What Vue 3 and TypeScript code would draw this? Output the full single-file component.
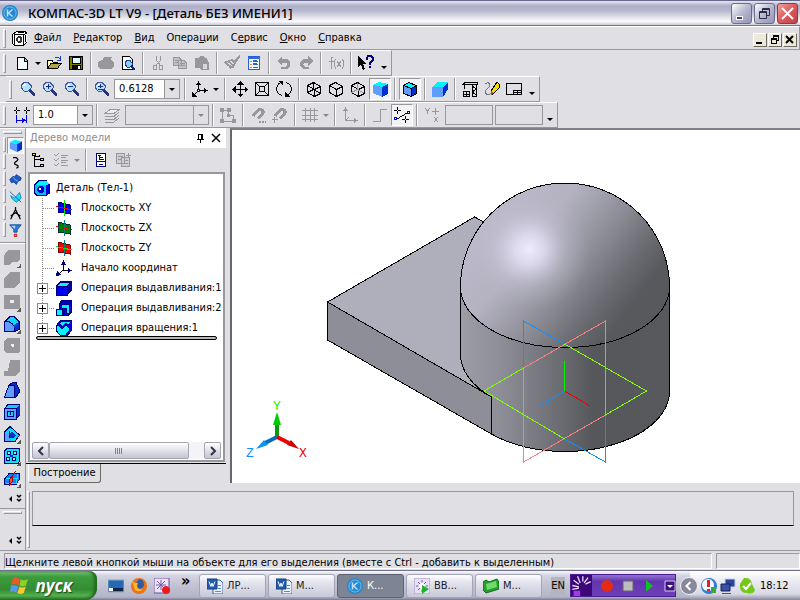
<script setup lang="ts">
import { h, ref } from 'vue'

type Shape = [d: string, fill?: string, stroke?: string, width?: number]

const G = '#98989c'
const K = '#000'
const N = '#00007b'
const lens: Shape[] = [
  ['M9 9 10 8 15 13V15H13L8 10Z', '#26347c'],
  ['M4 1.5H8L11 4.5V7L8 10H4L1.5 7V4Z', '#b4e2fb', '#3c56a4', 1],
  ['M4 3H6V4H5V5H3V4Z', '#fff'],
]
const wireCube: Shape[] = [
  ['M1.5 4.5 7.5 1.5 14.5 5.5V12.5L8.5 15.5 1.5 11.5Z', 'none', K],
  ['M1.5 4.5 8.5 8.5 14.5 5.5M8.5 8V15', 'none', K],
]
const magnet: Shape[] = [
  ['M3 9 8 3.5Q10.5 1.5 12.5 3.5 14 5.5 12 7.5L8 11.5', 'none', G, 3],
]

const icons: Record<string, Shape[]> = {
  part: [
    ['M2 4 7 1H14L16 4V12L12 16H4L1 13V5Z', '#fff', K],
    ['M3 4.5H12.5V15H3.5V5M13 5 15 3M14.5 5V12M7 2.5H13', 'none', K],
    ['M5 8 7 6H9L11 8V11L9 13H7L5 11Z', '#333'],
    ['M7 8H9V11H7Z', '#fff'],
  ],
  new: [['M3.5 2.5H10.5L13.5 5.5V14.5H3.5Z', '#f4fffd', K], ['M10 2.5V6H13.5', '#9cc', K]],
  open: [
    ['M1.5 5.5H6L7 7H11.5V13.5H1.5Z', '#ffffad', K],
    ['M1.5 13.5 5 8.5H15L11.5 13.5Z', '#b5a542', K],
    ['M8.5 3.5Q11 1 14 4M14.5 1V5H11', 'none', '#1b3cc8'],
  ],
  save: [
    ['M1.5 1.5H14.5V14.5H1.5Z', '#7b7b00', K],
    ['M4 2H12V8H4Z', '#dff', K],
    ['M4 10H13V14H4Z', K],
    ['M10 11H12V14H10Z', '#fff'],
  ],
  print: [['M1 6 5 5 6 2H14L13 5 16 7V12L13 14H3L0 12V8Z', G]],
  preview: [
    ['M2.5 1.5H9.5L12.5 4.5V14.5H2.5Z', '#fff', K],
    ['M7 5.5H10L12 8V10L10 12H7L5.5 10V7Z', '#84d2f8', '#1d3f98'],
    ['M11 11 15 15', 'none', '#16296f', 2],
  ],
  cut: [
    ['M6.5 1V5L8.5 8 10.5 5V1M8.5 7V8L5 11M8.5 8 11 11', 'none', G, 1],
    ['M3.5 10.5H6.5V14.5H3.5ZM9.5 10.5H12.5V14.5H9.5Z', 'none', G],
  ],
  copy: [
    ['M1.5 2.5H7L9.5 5V10.5H1.5ZM6.5 5.5H12L14.5 8V13.5H6.5Z', '#c3c3c6', G],
    ['M3 5.5H7M3 7.5H7M8 8.5H13M8 10.5H13', 'none', G],
  ],
  paste: [['M1 3H5L6 1H10L11 3H13L14 7H15V15H7L6 13H1Z', G], ['M8.5 8.5H12.5V13.5H8.5Z', '#d8d8dc']],
  brush: [
    ['M16 0 10 5 8 4 0 7 3 11 4 10 6 14 8 12 9 14 12 8 16 2Z', G],
    ['M3 7 8 11M6 6 10 9', 'none', '#ddd'],
  ],
  props: [
    ['M2.5 1.5H13.5V14.5H2.5Z', '#eef8ff', '#245edc'],
    ['M2 2H14V4H2Z', '#3068e0'],
    ['M4 6H6V7H4ZM4 9H6V10H4ZM4 12H6V13H4Z', '#e88020'],
    ['M7 6.5H12M7 9.5H12M7 12.5H12M7 5.5H11M7 8.5H11', 'none', '#2666d8'],
  ],
  undo: [['M1 6 6 1V4H11L14 7V11L11 14H5V12H9L11 10V9L10 8H6V11Z', G]],
  redo: [['M15 6 10 1V4H5L2 7V11L5 14H11V12H7L5 10V9L6 8H10V11Z', G]],
  fx: [
    ['M5 2.5H3.5V14M1 6.5H6M8 4 6.5 6V11L8 13.5M14 4 15.5 6V11L14 13.5', 'none', G],
    ['M9 6 13 12M13 6 9 12', 'none', G],
  ],
  help: [
    ['M0 1 8 9H5L7 14 5 15 3 10 0 12Z', K],
    ['M9 5V3L10 1H13L15 3V5L12 8V10', 'none', '#000080', 2],
    ['M11 11H13V13H11Z', '#000080'],
  ],
  zoom: lens,
  zoomIn: [...lens, ['M4 5.5H9M6.5 3V8', 'none', '#152a80']],
  zoomOut: [...lens, ['M4 5.5H9', 'none', '#152a80']],
  zoomFit: [...lens, ['M4 5.5H9M6.5 3V7M4 8.5H9', 'none', '#152a80']],
  axes: [
    ['M6.5 10V3M6.5 9.5H14M6 10 2 14', 'none', K],
    ['M6.5 0 9 4H4ZM16 9.5 12 7V12ZM0 16V11L5 16Z', K],
    ['M5.5 8.5H7.5V10.5H5.5Z', '#fff', '#00f'],
  ],
  move: [
    ['M8.5 2V14M2 8.5H14', 'none', K],
    ['M8.5 0 12 4H5ZM8.5 16 5 13H12ZM0 8.5 4 5V12ZM16 8.5 13 12V5Z', K],
  ],
  frame: [['M1.5 1.5H14.5V14.5H1.5ZM5.5 5.5H10.5V10.5H5.5ZM2 2 5 5M14 2 11 5M2 14 5 11M14 14 11 11', 'none', K]],
  rotate: [
    ['M6 14.5Q1 13 0.5 8 1 3 5 1.5M10 1.5Q15 3 15.5 8 15 13 11 14.5', 'none', K, 1],
    ['M2 0H7V5ZM9 11V16H14Z', K],
  ],
  wire: [...wireCube, ['M7.5 2V9M1.5 11.5 7.5 8.5 14.5 12.5', 'none', K]],
  hidden: wireCube,
  dashed: [...wireCube, ['M7.5 2V9M1.5 11.5 7.5 8.5 14.5 12.5', 'none', '#999']],
  solid: [
    ['M1 4 7 1 16 3 10 6Z', '#00f3ff'],
    ['M1 4 10 6V16L1 12Z', '#619cff'],
    ['M10 6 16 3V13L10 16Z', '#0030ce'],
  ],
  solidEdge: [
    ['M1.5 4.5 6.5 1.5 14.5 4.5 9.5 7.5Z', '#00f3ff', K],
    ['M1.5 4.5 9.5 7.5V15.5L1.5 12.5Z', '#619cff', K],
    ['M9.5 7.5 14.5 4.5V12.5L9.5 15.5Z', '#0030ce', K],
  ],
  perspective: [
    ['M0 6 6 1H16L11 6Z', '#00f3ff'],
    ['M0 6H11V16H0Z', '#619cff'],
    ['M11 6 16 1V8L11 16Z', '#0030ce'],
  ],
  crane: [
    ['M0.5 3.5 3 1.5H15.5V3.5ZM2.5 3V8M10.5 3.5V15.5H14.5V3.5M10.5 5 14 8 10.5 11 14 14', 'none', K],
    ['M1.5 10.5H7.5V15.5H1.5ZM4.5 10V15M1.5 13H7.5', 'none', K],
  ],
  pencil: [
    ['M1 3 4 1.5 6 3 5 6 2 9 1 12 4 14 8 12', 'none', '#777', 1],
    ['M13 1 15 3V7L9 13H7V10Z', '#efdc00', K],
    ['M7 10 10 12 7 14Z', '#c64220'],
  ],
  sheet: [['M0.5 2.5H15.5V13.5H0.5ZM7 13.5V9.5H15.5M7 11.5H15M11 9.5V13', 'none', K]],
  step: [
    ['M2.5 0V7M0 3.5H6M12.5 0V7M10 3.5H16', 'none', K],
    ['M2.5 8V16M12.5 8V16M3 13.5H12', 'none', '#0000d8'],
    ['M12 13.5 8 10.5V16Z', '#0000d8'],
    ['M2 3H3V4H2ZM12 3H13V4H12Z', '#fff'],
  ],
  layers: [
    ['M1 6.5 6 2.5H15L10 6.5Z', '#eee', G],
    ['M1 9.5 10 9.5 15 5M1 12.5 10 12.5 15 8M1 15 10 15 15 11', 'none', G],
  ],
  contour: [
    ['M2.5 3.5H8.5V8.5H13.5V14.5H2.5Z', 'none', G],
    ['M0 1H4V5H0ZM7 1H11V5H7ZM0 12H4V16H0ZM12 12H16V16H12ZM7 7H10V10H7Z', G],
  ],
  snap: [...magnet, ['M9 14H11V16H9ZM12 14H14V16H12ZM15 14H16V16H15Z', G]],
  magnet: [...magnet, ['M2.5 10V16M0 12.5H6', 'none', G]],
  grid: [['M3.5 1V15M8.5 1V15M12.5 1V15M0 3.5H16M0 8.5H16M0 12.5H16', 'none', G]],
  localAxes: [
    ['M3.5 2V13.5H14M4 13 7 10', 'none', G],
    ['M3.5 0 6 4H1ZM16 13.5 12 11V16Z', G],
  ],
  ortho: [['M1 14.5H8.5V2.5H15', 'none', G]],
  points: [
    ['M3.5 0V7M0 3.5H7M11.5 9V16M8 12.5H15', 'none', K],
    ['M3 12 13 6', 'none', K],
    ['M0.5 10.5H2.5V12.5H0.5ZM13.5 4.5H15.5V6.5H13.5Z', '#fff', '#0000d8'],
    ['M3 3H4V4H3ZM11 12H12V13H11Z', '#fff'],
  ],
  xy: [['M1 1 3.5 4 6 1M3.5 4V7M11.5 1V8M8 4.5H15M10 10 14 15M14 10 10 15', 'none', G]],
  tree: [
    ['M3.5 3V14.5H10M4 7.5H10M4 4H8V3', 'none', K],
    ['M1.5 1.5H4.5V3.5H1.5ZM9.5 6.5H12.5V8.5H9.5ZM9.5 12.5H12.5V14.5H9.5Z', '#ffe800', K],
  ],
  list: [
    ['M1 2 3 4 6 1M1 7 3 9 6 6M1 12 3 14 6 11', 'none', G],
    ['M8 3.5H15M8 8.5H15M8 13.5H15M8 5.5H13M8 10.5H13', 'none', G, 1],
  ],
  sheetTree: [
    ['M3.5 1.5H12.5V14.5H3.5Z', '#fff', N, 1],
    ['M3 9.5H13M6.5 3V7.5H11M6 5.5H10M5 3.5H8M6 12.5H10', 'none', N],
  ],
  copyTree: [
    ['M1.5 1.5H9.5V11.5H1.5ZM6.5 5.5H14.5V14.5H6.5Z', '#ceced2', G],
    ['M3 4.5H8M3 7.5H7M9 8.5H13M9 11.5H13M13.5 1V6M11 3.5H16', 'none', G],
  ],
  curve: [['M5 2H9L11 4 10 6 7 8 7 10 11 12 11 14 9 15', 'none', K, 1.5]],
  surface: [['M1 8 5 4 7 5 9 2 15 6 14 9 11 10 9 14 6 11 3 12Z', '#1a5cc8', '#0a2f80'], ['M5 5 7 8 11 10', 'none', '#7ec1ff']],
  plane: [['M2 7 7 10 13 3 15 10 9 15 4 11Z', '#25d7ff', '#08a'], ['M1 2 15 15', 'none', '#0050c8', 1]],
  measure: [['M8 3 2 15M8 3 14 15M8 3V0M2 11 8 7 14 11', 'none', K, 1.5]],
  filter: [['M1 1H15L10 7V10H6V7Z', '#2c7adc', '#0b3f98'], ['M3 2H8L7 6Z', '#a6dcff'], ['M6.5 12.5H9.5V15.5H6.5Z', '#f08080', '#c00']],
  grayA: [['M1 4 4 0H16V10L13 12 8 12 5 15H0V5Z', G]],
  grayB: [['M0 7 6 0H16V10L11 16H0Z', G]],
  grayC: [['M0 1H16V15H0Z', G], ['M6 6H10V9H6Z', '#eee']],
  grayD: [['M0 3 4 0H16V13L14 15H3L0 13Z', G], ['M7 6H10V9H8Z', '#eee']],
  grayE: [['M6 0H16V11L12 16H0V11H4Z', G]],
  fillet: [['M0.5 6 6 0.5H10L15.5 6V13L11 15.5H0.5Z', '#10d8f0', N], ['M0.5 6Q6 4 10 10V15.5H0.5Z', '#619cff', N], ['M10 9 15 6V13L11 15Z', '#0030ce']],
  draft: [['M5 3 9 0.5H12L16 9 12 15 0.5 15Z', '#0030ce', N], ['M5 3H10L11 15H0.5Z', '#619cff', N]],
  shell: [
    ['M0.5 4.5 4 0.5H15.5V11L12 15.5H0.5Z', '#0ccfe9', N],
    ['M12 5 15.5 1V11L12 15Z', '#0030ce'],
    ['M0.5 4.5H12V15.5H0.5Z', '#619cff', N],
    ['M3.5 7.5H9V12.5H3.5Z', '#00dfff', N],
    ['M6.5 7.5V11', 'none', N],
  ],
  cutPlane: [['M0.5 6 6 0.5 15.5 9 11 15.5H0.5Z', '#00e0ee', N], ['M1 7H5V11L8 15H1Z', '#619cff'], ['M5 5V11H10', 'none', N], ['M5 8 8 6 12 10 7 12Z', '#0030ce']],
  array: [['M0.5 3 3 0.5H15.5V13L14 15.5H0.5Z', '#19dbea', N], ['M3.5 3.5H6.5V6.5H3.5ZM9.5 3.5H12.5V6.5H9.5ZM2.5 9.5H5.5V12.5H2.5ZM8.5 9.5H11.5V12.5H8.5Z', '#74ffff', N], ['M6 7 9 9', 'none', '#0030ce', 2]],
  section: [['M0.5 9 5 3.5H15.5V9L12 14.5H0.5Z', '#207cf8', N], ['M2 8.5H12V13H2M13 4V9', 'none', '#00eaff'], ['M12 1 8 6V12L5 16V10Z', '#ff4a20', '#a00']],
  detail: [
    ['M0.5 5 5 0.5H12L15.5 5V13L12 15.5H3L0.5 13Z', '#00bdf6', N],
    ['M12 5 15 4V13L12 15Z', '#0000d8'],
    ['M1 5 5 1H12L15 4 12 5Z', '#00f3ff'],
    ['M5 6H8L10 8V11L8 13H5L3 11V8Z', '#0000c8'],
    ['M5 8H7V10H5Z', '#fff'],
  ],
  planeXY: [['M2 2 14 5V14L2 12Z', '#0000f0', N], ['M8.5 0V16', 'none', '#0e0'], ['M0 6.5 16 10', 'none', '#f00']],
  planeZX: [['M2 2 14 5V14L2 12Z', '#007b00', '#002f2f'], ['M8.5 0V16', 'none', '#008080'], ['M0 6.5 16 10', 'none', '#f00']],
  planeZY: [['M2 2 14 5V14L2 12Z', '#f00', '#700'], ['M8.5 0V16', 'none', '#008080'], ['M0 6.5 16 10', 'none', '#0e0']],
  origin: [['M7.5 10V3M7 10.5H14M7 10 3 14', 'none', K], ['M7.5 0 10 5H5ZM16 10.5 12 8V13ZM0 16 1 11 5 15Z', N]],
  extrude: [['M0.5 6 5 1.5H15.5V10L11 15.5H0.5Z', '#0000f0', N], ['M1 6 5 2H15L11 6Z', '#00f3ff', N], ['M11 6 15.5 1.5V10L11 15Z', '#0000a0', N]],
  extrudeL: [
    ['M3 4 6 0.5H15.5V12L12 15.5H7V11H3Z', '#0000d0', N],
    ['M5 4.5H13V13H10V8H5Z', '#00f3ff', N],
    ['M0.5 9.5H6V15.5H0.5Z', '#00f3ff', N],
  ],
  revolve: [
    ['M1 4 5 0.5H15.5V10L12 15H4L1 12Z', '#0000d0', N],
    ['M5 2H14L12 4 10 3 6 6 4 4Z', '#00f3ff'],
    ['M1 5 3 5 6 9 10 5 13 8V11L10 15H4L0.5 11Z', '#00f3ff', N],
  ],
  word: [
    ['M6 2H13L16 5V16H6Z', '#eaf2ff', '#3660a8'],
    ['M0 1H10V11H0Z', '#2359ae', '#17407f'],
    ['M2 3.5 4 8.5 5 5 6 8.5 8 3.5', 'none', '#fff'],
    ['M8 13.5H14M11 10.5H14M11 7.5H14', 'none', '#5c88cc'],
  ],
  compass: [
    ['M8 0A8 8 0 1 0 8.01 0Z', '#2388d0'],
    ['M8 2A6 6 0 1 0 8.01 2Z', 'none', '#7abce8'],
    ['M5.5 4.5V11.5M10.5 4.5 6.5 8 10.5 11.5', 'none', '#c0e0f6', 1.5],
  ],
  gear: [
    ['M0 0H16V16H0Z', '#e7dff5', '#a893c8'],
    ['M8 2V14M2 8H14M4 4 12 12M12 4 4 12', 'none', '#7a56b0'],
    ['M8 4 12 8 8 12 4 8Z', '#fff'],
    ['M8 7 15 11 8 16Z', '#21b32b'],
  ],
  camtasia: [['M0 4 3 2 6 4 14 1 16 4V11L3 15 0 12Z', '#24a02c', '#0d6f18'], ['M3 6 13 3 14 9 4 12Z', '#72d96d']],
  desktop: [['M0 2H16V14H0Z', '#2468b8', '#8ab'], ['M1 10H15V13H1Z', '#124'], ['M1 10H5V13H1Z', '#fff']],
  firefox: [
    ['M8 0A8 8 0 1 0 8.01 0Z', '#e8741a'],
    ['M8 1Q13 1 13 7 12 11 8 11 4 10 5 5Z', '#2f5ba8'],
    ['M1 3 4 5 7 5 6 8Q7 12 12 11 9 15 4 12Z', '#ffb42a'],
  ],
  recorder: [
    ['M0 0H15V15H0Z', '#ebe3f8', '#6b4c98'],
    ['M7 2V12M2 7H12M3 3 11 11M11 3 3 11', 'none', '#7a5cac'],
    ['M12 8A4 4 0 1 0 12.01 8Z', '#ee1a1a'],
  ],
  swirl: [
    ['M0 0H16V16H0Z', '#3c0878'],
    ['M6 9 1 8M6 7 2 4M7 6 5 1M9 5 9 1M10 6 13 2M11 7 15 5M6 10 1 11', 'none', '#f0dcff', 1],
    ['M2 12H7V16H2Z', '#a23ae8'],
  ],
  shield: [
    ['M8 0A8 8 0 1 0 8.01 0Z', '#2b7fd6'],
    ['M7 1A6 6 0 1 0 7.01 1Z', '#f8f8ff'],
    ['M6 2H9V9H6ZM6 11H9V13H6Z', '#e22222'],
    ['M10 9H15V15H10Z', '#3aa83a'],
  ],
  network: [
    ['M5 1H15V9H5Z', '#26449c', '#c8d0e8'],
    ['M1 6H10V13H1Z', '#3a50a8', '#142050'],
    ['M2 15H11V16H2Z', '#555'],
  ],
  skype: [
    ['M5 0Q12 -1 13 6L16 12Q14 17 8 15 0 15 1 6Z', '#74c818'],
    ['M4 8 7 11 12 5', 'none', '#fff', 2],
  ],
}

const Icon = (props: { name: string; size?: number }) =>
  h(
    'svg',
    { class: 'icon', viewBox: '0 0 16 16', width: props.size ?? 16, height: props.size ?? 16, 'aria-hidden': 'true' },
    icons[props.name].map(([d, fill, stroke, width]) =>
      h('path', { d, fill: fill ?? 'none', stroke: stroke ?? 'none', 'stroke-width': width ?? 1 }),
    ),
  )
Icon.props = ['name', 'size']

type Item =
  | { kind: 'btn'; icon: string; label: string; on?: boolean; off?: boolean }
  | { kind: 'sep' }
  | { kind: 'arrow'; off?: boolean }
  | { kind: 'more' }
  | { kind: 'combo'; cls: string; value: string; label: string; off?: boolean }
  | { kind: 'field'; label: string }

const b = (icon: string, label: string): Item => ({ kind: 'btn', icon, label })
const on = (icon: string, label: string): Item => ({ kind: 'btn', icon, label, on: true })
const off = (icon: string, label: string): Item => ({ kind: 'btn', icon, label, off: true })
const sep: Item = { kind: 'sep' }
const more: Item = { kind: 'more' }

const toolbars: { name: string; items: Item[] }[] = [
  {
    name: 'standard',
    items: [
      b('new', 'Создать'), { kind: 'arrow' }, b('open', 'Открыть'), b('save', 'Сохранить'), sep,
      off('print', 'Печать'), b('preview', 'Просмотр'), sep,
      off('cut', 'Вырезать'), off('copy', 'Копировать'), off('paste', 'Вставить'), sep,
      off('brush', 'Копировать свойства'), b('props', 'Свойства'), sep,
      off('undo', 'Отменить'), off('redo', 'Повторить'), sep,
      off('fx', 'Переменные'), sep, b('help', 'Справка'), more,
    ],
  },
  {
    name: 'view',
    items: [
      b('zoom', 'Увеличить рамкой'), b('zoomIn', 'Увеличить'), b('zoomOut', 'Уменьшить'), sep,
      b('zoomFit', 'Масштаб'), { kind: 'combo', cls: 'zoom', value: '0.6128', label: 'Текущий масштаб' }, sep,
      b('axes', 'Ориентация'), { kind: 'arrow' }, sep,
      b('move', 'Сдвинуть'), b('frame', 'Показать все'), b('rotate', 'Повернуть'), sep,
      b('wire', 'Каркас'), b('hidden', 'Без невидимых линий'), b('dashed', 'Невидимые линии тонкие'), on('solid', 'Полутоновое'), sep,
      on('solidEdge', 'Полутоновое с каркасом'), sep, b('perspective', 'Перспектива'), sep,
      b('crane', 'Перестроить'), b('pencil', 'Эскиз'), b('sheet', 'Чертеж'), more,
    ],
  },
  {
    name: 'state',
    items: [
      b('step', 'Шаг курсора'), { kind: 'combo', cls: 'step', value: '1.0', label: 'Шаг' }, sep,
      off('layers', 'Слои'), { kind: 'combo', cls: 'layer', value: '', label: 'Слой', off: true }, sep,
      off('contour', 'Контур'), sep, off('snap', 'Привязки'), off('magnet', 'Запретить привязки'), sep,
      off('grid', 'Сетка'), { kind: 'arrow', off: true }, sep, off('localAxes', 'Система координат'), sep,
      off('ortho', 'Ортогонально'), on('points', 'Округление'), sep, off('xy', 'Координаты'),
      { kind: 'field', label: 'X' }, { kind: 'field', label: 'Y' }, more,
    ],
  },
]

const menu = [
  ['', 'Ф', 'айл'], ['', 'Р', 'едактор'], ['', 'В', 'ид'], ['Опера', 'ц', 'ии'],
  ['С', 'е', 'рвис'], ['', 'О', 'кно'], ['', 'С', 'правка'],
]

const modes = [
  ['solid', 'Редактирование детали'], ['curve', 'Кривые'], ['surface', 'Поверхности'],
  ['plane', 'Вспомогательная геометрия'], ['measure', 'Измерения'], ['filter', 'Фильтры'],
]
const tools: [string, string, boolean][] = [
  ['grayA', 'Выдавливание', true], ['grayB', 'Приклеить', false], ['grayC', 'Вырезать', true],
  ['fillet', 'Скругление', true], ['grayD', 'Отверстие', false], ['grayE', 'Ребро', false],
  ['draft', 'Уклон', false], ['shell', 'Оболочка', false], ['cutPlane', 'Сечение', true],
  ['array', 'Массив', true], ['section', 'Разрез', true],
]

const nodes = ref([
  { icon: 'planeXY', text: 'Плоскость XY', group: false },
  { icon: 'planeZX', text: 'Плоскость ZX', group: false },
  { icon: 'planeZY', text: 'Плоскость ZY', group: false },
  { icon: 'origin', text: 'Начало координат', group: false },
  { icon: 'extrude', text: 'Операция выдавливания:1', group: true },
  { icon: 'extrudeL', text: 'Операция выдавливания:2', group: true },
  { icon: 'revolve', text: 'Операция вращения:1', group: true },
])

const tasks = [
  { icon: 'word', text: 'ЛР...', active: false },
  { icon: 'word', text: 'М...', active: false },
  { icon: 'compass', text: 'К...', active: true },
  { icon: 'gear', text: 'BB...', active: false },
  { icon: 'camtasia', text: 'М...', active: false },
]
</script>

<template>
  <div class="window">
    <header class="title">
      <Icon name="compass" />
      <h1>КОМПАС-3D LT V9 - [Деталь БЕЗ ИМЕНИ1]</h1>
      <div class="caption">
        <button aria-label="Свернуть"><svg viewBox="0 0 19 19"><path d="M4 12H11V16H4Z" fill="#fff" /><path d="M5 13H10V15H5Z" fill="#3b3f60" /></svg></button>
        <button aria-label="Восстановить"><svg viewBox="0 0 19 19" fill="none" stroke="#2c2e48"><path d="M7.5 7V4.5H14.5V11.5H12M7 5.5H15M4.5 7.5H11.5V14.5H4.5ZM4 8.5H12" /></svg></button>
        <button class="close" aria-label="Закрыть"><svg viewBox="0 0 19 19"><path d="M4 4 15 15M15 4 4 15" stroke="#fff" stroke-width="2" /></svg></button>
      </div>
    </header>

    <nav class="menubar">
      <span class="grip"></span>
      <Icon name="part" />
      <ul>
        <li v-for="m in menu" :key="m.join('')"><a href="#">{{ m[0] }}<u>{{ m[1] }}</u>{{ m[2] }}</a></li>
      </ul>
      <div class="mdi">
        <button aria-label="Свернуть окно"><svg viewBox="0 0 12 12"><path d="M2 8H8V10H2Z" /></svg></button>
        <button aria-label="Восстановить окно"><svg viewBox="0 0 12 12"><path d="M4 1H10V7H8V6H9V3H5V4H4ZM2 4H8V10H2ZM3 6V9H7V6Z" fill-rule="evenodd" /></svg></button>
        <button aria-label="Закрыть окно"><svg viewBox="0 0 12 12"><path d="M2 2 9 9M9 2 2 9" stroke="#000" stroke-width="2" /></svg></button>
      </div>
    </nav>

    <div v-for="bar in toolbars" :key="bar.name" class="toolbar" :class="bar.name" role="toolbar">
      <span class="grip"></span>
      <template v-for="(it, i) in bar.items" :key="i">
        <button v-if="it.kind === 'btn'" class="tool" :class="{ on: it.on }" :disabled="it.off" :aria-label="it.label">
          <Icon :name="it.icon" />
        </button>
        <span v-else-if="it.kind === 'sep'" class="sep"></span>
        <button v-else-if="it.kind === 'arrow'" class="arrow" :disabled="it.off" aria-label="Список"><i></i></button>
        <button v-else-if="it.kind === 'more'" class="arrow more" aria-label="Другие кнопки"><i></i></button>
        <label v-else-if="it.kind === 'combo'" class="combo" :class="it.cls">
          <select :aria-label="it.label" :disabled="it.off"><option>{{ it.value }}</option></select>
          <span class="drop"><i></i></span>
        </label>
        <input v-else class="field" type="text" :aria-label="it.label" disabled />
      </template>
    </div>

    <div class="body">
      <aside class="strip">
        <span class="hgrip"></span>
        <div class="modes">
          <div v-for="(m, i) in modes" :key="m[0]" class="mode">
            <span class="grip"></span>
            <button :class="{ on: i === 0 }" :aria-label="m[1]"><Icon :name="m[0]" :size="13" /></button>
          </div>
        </div>
        <div class="tools">
          <button v-for="t in tools" :key="t[0]" :class="{ flyout: t[2] }" :aria-label="t[1]"><Icon :name="t[0]" /></button>
        </div>
        <button class="expand" aria-label="Развернуть панель">
          <svg viewBox="0 0 16 10"><path d="M5 2V8L2 5Z" /><path d="M10 1 12 3 14 1M10 5 12 7 14 5" fill="none" stroke="#000" stroke-width="1.5" /></svg>
        </button>
        <div class="strip-end">
          <span class="hgrip"></span>
          <button class="expand" aria-label="Развернуть свойства">
            <svg viewBox="0 0 16 10"><path d="M5 2V8L2 5Z" /><path d="M10 1 12 3 14 1M10 5 12 7 14 5" fill="none" stroke="#000" stroke-width="1.5" /></svg>
          </button>
        </div>
      </aside>

      <div class="work">
        <div class="upper">
          <section class="panel">
            <div class="panel-head">
              <h2>Дерево модели</h2>
              <button aria-label="Закрепить"><svg viewBox="0 0 10 10"><path d="M3 1H8V6H9V7H6V10H5V7H2V6H3ZM4 2V6H6V2Z" fill-rule="evenodd" /></svg></button>
              <button aria-label="Закрыть панель"><svg viewBox="0 0 10 10"><path d="M1 1 9 9M9 1 1 9" stroke="#000" stroke-width="1.5" /></svg></button>
            </div>
            <div class="panel-tools">
              <button class="tool" aria-label="Дерево"><Icon name="tree" /></button>
              <button class="tool" aria-label="Состав" disabled><Icon name="list" /></button>
              <button class="arrow" aria-label="Список" disabled><i></i></button>
              <span class="sep"></span>
              <button class="tool" aria-label="Отношения"><Icon name="sheetTree" /></button>
              <button class="tool" aria-label="Дополнительное окно" disabled><Icon name="copyTree" /></button>
            </div>
            <div class="tree">
              <div class="root"><Icon name="detail" /><span>Деталь (Тел-1)</span></div>
              <ul>
                <li v-for="(n, i) in nodes" :key="n.text">
                  <svg class="branch" viewBox="0 0 20 20" aria-hidden="true">
                    <path :d="i === nodes.length - 1 ? 'M6.5 0V10' : 'M6.5 0V20'" />
                    <path d="M7 10.5H19" />
                    <g v-if="n.group">
                      <path class="box" d="M1.5 5.5H11.5V15.5H1.5Z" />
                      <path class="plus" d="M3 10.5H10M6.5 7V14" />
                    </g>
                  </svg>
                  <Icon :name="n.icon" />
                  <span>{{ n.text }}</span>
                </li>
              </ul>
              <div class="marker"></div>
              <div class="hscroll">
                <button aria-label="Влево"><svg viewBox="0 0 10 10"><path d="M7 1 3 5 7 9" /></svg></button>
                <div class="track"><div class="thumb"><i></i><i></i><i></i><i></i></div></div>
                <button aria-label="Вправо"><svg viewBox="0 0 10 10"><path d="M3 1 7 5 3 9" /></svg></button>
              </div>
            </div>
            <div class="tabs"><button>Построение</button></div>
          </section>

          <main class="scene">
            <svg viewBox="232 130 568 353" preserveAspectRatio="xMidYMid meet" role="img" aria-label="Модель детали">
              <defs>
                <linearGradient id="dome" gradientUnits="userSpaceOnUse" x1="490" y1="215" x2="622" y2="318">
                  <stop offset="0" stop-color="#bcbaca" /><stop offset="0.3" stop-color="#b4b2c1" />
                  <stop offset="0.6" stop-color="#8e8e98" /><stop offset="0.85" stop-color="#696a6f" /><stop offset="1" stop-color="#58595d" />
                </linearGradient>
                <radialGradient id="shine" gradientUnits="userSpaceOnUse" cx="529" cy="250" r="62">
                  <stop offset="0" stop-color="#efecff" /><stop offset="0.25" stop-color="#e4e1f6" stop-opacity="0.8" />
                  <stop offset="0.6" stop-color="#c9c7d8" stop-opacity="0.35" /><stop offset="1" stop-color="#b4b2c1" stop-opacity="0" />
                </radialGradient>
                <linearGradient id="wall" gradientUnits="userSpaceOnUse" x1="460" y1="0" x2="669" y2="0">
                  <stop offset="0" stop-color="#9d9da8" /><stop offset="0.2" stop-color="#8d8d97" />
                  <stop offset="0.45" stop-color="#6f7076" /><stop offset="0.64" stop-color="#56575a" /><stop offset="1" stop-color="#58595d" />
                </linearGradient>
              </defs>
              <g class="model">
                <g stroke="#000">
                  <path d="M327.5 302 474.5 217 484 222 520 260V410H491.5Z" fill="#afaebb" />
                  <path d="M327.5 302 491.5 397V434L327.5 340Z" fill="#8e8e98" />
                </g>
                <path d="M460.5 287V354A104 60 0 0 0 491.5 397V434A104.5 60.5 0 0 0 669.5 391V287Z" fill="url(#wall)" />
                <path d="M460.5 287V354A104 60 0 0 0 491.5 397V434A104.5 60.5 0 0 0 669.5 391V287" fill="none" stroke="#000" />
                <path d="M460.5 287A104.5 104 0 0 1 669.5 287A104.5 60.5 0 0 1 460.5 287Z" fill="url(#dome)" />
                <path d="M460.5 287A104.5 104 0 0 1 669.5 287A104.5 60.5 0 0 1 460.5 287Z" fill="url(#shine)" stroke="#000" />
              </g>
              <g fill="none" class="thin">
                <path stroke="#1090ff" d="M523.5 367V321L564.5 344M564.5 439 605.5 462V415" />
                <path stroke="#f88080" d="M605.5 415V321L523.5 368V462L605.5 415" />
                <path stroke="#80ff00" d="M523.5 368 484 391 564.5 439M564.5 344 646.5 391 605.5 415" />
                <path stroke="#00f000" d="M564.5 391V361" />
                <path stroke="#f00000" d="M564.5 391 590 406" />
                <path stroke="#1090ff" d="M564.5 391 540 406" />
              </g>
              <g>
                <path d="M277 437V423" stroke="#0a9a0a" stroke-width="4" /><path d="M277 412 281 425H273Z" fill="#0c0" />
                <path d="M277 437 265 443" stroke="#0070c0" stroke-width="4" /><path d="M256 449 264 440 268 445Z" fill="#1090f0" />
                <path d="M277 437 289 443" stroke="#f00000" stroke-width="4" /><path d="M299 449 291 440 287 445Z" fill="#c80000" />
                <text x="273" y="410" fill="#00f800">Y</text>
                <text x="246" y="457" fill="#1090ff">Z</text>
                <text x="299" y="457" fill="#f00000">X</text>
              </g>
            </svg>
          </main>
        </div>
        <section class="properties">
          <span class="grip"></span>
          <div class="prop-box"></div>
        </section>
      </div>
    </div>

    <footer class="status">
      <p>Щелкните левой кнопкой мыши на объекте для его выделения (вместе с Ctrl - добавить к выделенным)</p>
      <p class="status-end"></p>
    </footer>

    <div class="taskbar">
      <button class="start">
        <svg viewBox="0 0 18 18" aria-hidden="true">
          <path d="M3 2Q6 0 9 3L8 9Q5 7 1 8Z" fill="#f0562a" /><path d="M10 3Q13 5 17 3L15 9Q12 11 9 9Z" fill="#8fd028" />
          <path d="M1 9Q5 8 8 10L6 16Q4 14 0 15Z" fill="#5a98f0" /><path d="M9 10Q12 12 15 10L13 16Q10 18 7 16Z" fill="#ffc828" />
        </svg>
        <span>пуск</span>
      </button>
      <div class="quick">
        <button aria-label="Рабочий стол"><Icon name="desktop" /></button>
        <button aria-label="Браузер"><Icon name="firefox" /></button>
        <button aria-label="Запись"><Icon name="recorder" /></button>
        <span>»</span>
      </div>
      <div class="tasks">
        <button v-for="(t, i) in tasks" :key="i" class="task" :class="{ active: t.active }">
          <Icon :name="t.icon" /><span>{{ t.text }}</span>
        </button>
      </div>
      <span class="lang">EN</span>
      <div class="player">
        <Icon name="swirl" :size="21" />
        <button aria-label="Запись"><svg viewBox="0 0 12 12"><circle cx="6" cy="6" r="6" fill="#e32c18" /></svg></button>
        <button aria-label="Стоп"><svg viewBox="0 0 12 12"><path d="M1 1H11V11H1Z" fill="#bdbdbd" stroke="#666" /></svg></button>
        <button aria-label="Пуск"><svg viewBox="0 0 12 12"><path d="M3 0 10 6 3 12Z" fill="#10c020" /></svg></button>
        <button aria-label="Меню"><svg viewBox="0 0 12 12"><path d="M1 1H11V11H1Z" fill="#3c1478" stroke="#d8c8f4" /><path d="M3 5H9L6 8Z" fill="#fff" /></svg></button>
      </div>
      <div class="tray">
        <button class="chevron" aria-label="Показать значки"><svg viewBox="0 0 16 16"><path d="M9.5 4 5.5 8 9.5 12" fill="none" stroke="#fff" stroke-width="2" /></svg></button>
        <Icon name="shield" /><Icon name="network" /><Icon name="skype" />
        <time>18:12</time>
      </div>
    </div>
  </div>
</template>

<style>
body {
  margin: 0;
  background: #e0dfe3;
}
</style>

<style scoped>
.window {
  display: flex;
  flex-direction: column;
  height: 100vh;
  background: #e0dfe4;
  color: #000;
  font: 11px/14px 'DejaVu Sans Condensed', 'DejaVu Sans', sans-serif;
  overflow: hidden;
}
.window * {
  box-sizing: border-box;
}
button {
  display: inline-flex;
  align-items: center;
  justify-content: center;
  padding: 0;
  margin: 0;
  border: 0;
  background: none;
  color: inherit;
  font: inherit;
  flex: none;
}
ul {
  list-style: none;
  margin: 0;
  padding: 0;
}
p,
h1,
h2 {
  margin: 0;
  font: inherit;
}
.icon {
  display: block;
  flex: none;
  shape-rendering: crispEdges;
}

.title {
  display: flex;
  align-items: center;
  height: 26px;
  flex: none;
  padding: 0 2px;
  border-top: 1px solid #66668a;
  border-bottom: 1px solid #77778f;
  background: linear-gradient(#e8e8f2, #aeaec8 20%, #b8b8ce 40%, #fbfbfd 85%, #c8c8d6);
}
.title h1 {
  flex: 1;
  margin-left: 10px;
  font: 500 13px/20px 'Noto Sans', sans-serif;
  white-space: nowrap;
}
.title .icon,
.mode .icon,
.taskbar .icon {
  shape-rendering: auto;
}
.caption {
  display: flex;
  gap: 2px;
}
.caption button {
  width: 21px;
  height: 21px;
  border: 1px solid #6c6c90;
  border-radius: 3px;
  background: linear-gradient(135deg, #fff, #b8b8d0 50%, #9494b4);
}
.caption svg {
  width: 19px;
  height: 19px;
}
.caption .close {
  border-color: #8c3a44;
  background: linear-gradient(135deg, #f0a0a0, #dc5a5a 50%, #c04048);
}

.menubar {
  display: flex;
  align-items: center;
  height: 24px;
  flex: none;
  padding: 0 2px 0 3px;
  border-top: 1px solid #fff;
  border-right: 1px solid #98989c;
  border-bottom: 1px solid #98989c;
}
.menubar > .icon {
  margin-left: 5px;
}
.menubar ul {
  display: flex;
  gap: 12px;
  flex: 1;
  margin-left: 7px;
}
.menubar a {
  color: #000;
  text-decoration: none;
}
.mdi {
  display: flex;
  gap: 1px;
  padding-top: 4px;
}
.mdi button {
  width: 14px;
  height: 14px;
  border: 1px solid;
  border-color: #fff #6c6a60 #6c6a60 #fff;
  background: #ece9d8;
}
.mdi svg {
  width: 12px;
  height: 12px;
}

.grip {
  flex: none;
  width: 3px;
  height: 19px;
  border: 1px solid;
  border-color: #fff #98989c #98989c #fff;
}
.toolbar {
  display: flex;
  align-items: center;
  align-self: flex-start;
  flex: none;
  height: 26px;
  padding-left: 3px;
  border-top: 1px solid #fff;
  border-right: 1px solid #98989c;
  border-bottom: 1px solid #98989c;
}
.toolbar > .grip {
  margin-right: 5px;
}
.toolbar.view {
  margin-left: 6px;
}
.tool {
  width: 22px;
  height: 22px;
}
.tool.on,
.mode .on {
  border: 1px solid;
  border-color: #98989c #fff #fff #98989c;
  background: #f3f3f6;
}
.sep {
  flex: none;
  width: 2px;
  height: 22px;
  margin: 0 3px;
  border-left: 1px solid #98989c;
  border-right: 1px solid #fff;
}
.arrow {
  width: 10px;
  height: 22px;
}
.arrow i,
.drop i {
  border: 3px solid transparent;
  border-top: 3px solid #000;
  border-bottom: 0;
}
.arrow:disabled i,
.layer .drop i {
  border-top-color: #88888c;
}
.arrow.more {
  width: 14px;
  padding-top: 8px;
}
.combo {
  display: flex;
  height: 20px;
  border: 1px solid #98989c;
}
.combo.zoom {
  width: 66px;
  margin: 0 1px;
}
.combo.step {
  width: 60px;
}
.combo.layer {
  width: 84px;
  margin-left: 2px;
}
.combo select {
  appearance: none;
  flex: 1;
  min-width: 0;
  padding: 0 4px;
  border: 0;
  border-radius: 0;
  background: #fff;
  color: #000;
  font: inherit;
}
.combo select:disabled {
  background: #e0dfe4;
}
.drop {
  display: flex;
  align-items: center;
  justify-content: center;
  width: 15px;
  border-left: 1px solid #98989c;
}
.field {
  width: 48px;
  height: 20px;
  margin-left: 2px;
  padding: 0 3px;
  border: 1px solid #98989c;
  background: #e0dfe4;
}

.body {
  display: flex;
  flex: 1;
  min-height: 0;
}
.strip {
  display: flex;
  flex-direction: column;
  width: 26px;
  flex: none;
  border-top: 1px solid #fff;
  border-right: 1px solid #98989c;
}
.hgrip {
  display: block;
  flex: none;
  height: 3px;
  margin: 2px 3px;
  border: 1px solid;
  border-color: #fff #98989c #98989c #fff;
}
.modes {
  padding: 1px 0 3px 3px;
  border-bottom: 1px solid #98989c;
}
.mode {
  display: flex;
  gap: 1px;
  height: 17px;
}
.mode .grip {
  height: 15px;
}
.mode button {
  width: 17px;
  height: 17px;
}
.tools {
  display: flex;
  flex-direction: column;
  padding-top: 3px;
  border-top: 1px solid #fff;
}
.tools button {
  width: 24px;
  height: 22px;
}
.flyout {
  background: linear-gradient(135deg, transparent 50%, #5c5c50 50%) no-repeat 17px 17px / 4px 4px;
}
.expand {
  align-self: flex-end;
  width: 20px;
  height: 19px;
}
.expand svg {
  width: 16px;
  height: 10px;
}
.strip-end {
  display: flex;
  flex-direction: column;
  justify-content: space-between;
  flex: 1;
  border-top: 1px solid #98989c;
}

.work {
  display: flex;
  flex-direction: column;
  flex: 1;
  min-width: 0;
}
.upper {
  display: flex;
  flex: 1;
  min-height: 0;
}
.panel {
  display: flex;
  flex-direction: column;
  width: 200px;
  margin-right: 4px;
  flex: none;
}
.panel-head {
  display: flex;
  align-items: center;
  gap: 6px;
  height: 20px;
  flex: none;
  padding: 0 5px 0 4px;
  background: #fff;
}
.panel-head h2 {
  flex: 1;
  color: #8c8c90;
}
.panel-head svg {
  width: 10px;
  height: 10px;
}
.panel-tools {
  display: flex;
  align-items: center;
  height: 24px;
  flex: none;
  padding-left: 2px;
}
.tree {
  display: flex;
  flex-direction: column;
  flex: 1;
  min-height: 0;
  margin: 0 1px 0 2px;
  padding: 4px 0 1px 2px;
  border: 2px solid #98989c;
  background: #fff;
}
.root {
  display: flex;
  align-items: center;
  gap: 6px;
  height: 20px;
  flex: none;
  padding-left: 2px;
}
.tree li {
  display: flex;
  align-items: center;
  height: 20px;
  padding-left: 4px;
  white-space: nowrap;
}
.tree li span {
  margin-left: 9px;
}
.branch {
  width: 20px;
  height: 20px;
  flex: none;
  fill: none;
  stroke: #8c8c84;
  stroke-dasharray: 1 1;
  shape-rendering: crispEdges;
}
.branch .box,
.branch .plus {
  stroke-dasharray: none;
  fill: #fff;
}
.branch .plus {
  stroke: #000;
}
.marker {
  flex: none;
  height: 4px;
  margin: -2px 6px 0 4px;
  border: 1px solid #000;
  border-radius: 2px;
  background: #b8b8bc;
}
.hscroll {
  display: flex;
  height: 17px;
  flex: none;
  margin: auto 2px 0 0;
  background: #f4f3f8;
}
.hscroll button,
.thumb {
  border: 1px solid #a4a4b4;
  border-radius: 2px;
  background: linear-gradient(#fff, #c4c4d4);
}
.hscroll button {
  width: 17px;
}
.hscroll button svg {
  width: 10px;
  height: 10px;
  fill: none;
  stroke: #333344;
  stroke-width: 2;
}
.track {
  flex: 1;
}
.thumb {
  display: flex;
  align-items: center;
  justify-content: center;
  gap: 1px;
  width: 90%;
  height: 17px;
}
.thumb i {
  width: 1px;
  height: 6px;
  background: #808098;
}
.tabs {
  height: 20px;
  flex: none;
  margin-top: 1px;
  padding-left: 2px;
  border-top: 1px solid #000;
}
.tabs button {
  width: 73px;
  height: 19px;
  border: 1px solid #6c6a60;
  border-top: 0;
  border-left-color: #fff;
  border-radius: 0 0 3px 3px;
}
.scene {
  flex: 1;
  min-width: 0;
  border-top: 2px solid #808088;
  border-left: 2px solid #68686c;
  background: #fff;
}
.scene svg {
  display: block;
  width: 100%;
  height: 100%;
}
.scene text {
  font: 13px 'Liberation Mono', monospace;
}
.thin,
.model {
  shape-rendering: crispEdges;
}
.properties {
  display: flex;
  gap: 2px;
  height: 67px;
  flex: none;
  padding: 8px 6px 2px 1px;
}
.properties .grip {
  height: auto;
}
.prop-box {
  flex: 1;
  height: 35px;
  border: 1px solid #98989c;
  border-bottom-color: #000;
}

.status {
  display: flex;
  gap: 4px;
  height: 20px;
  flex: none;
  padding: 2px 0 1px 4px;
  border-top: 1px solid #98989c;
}
.status p {
  flex: 1;
  border: 1px solid;
  border-color: #98989c #fff #fff #98989c;
  line-height: 17px;
  white-space: nowrap;
}
.status .status-end {
  flex: 0 0 84px;
}

.taskbar {
  display: flex;
  align-items: center;
  height: 30px;
  flex: none;
  border-top: 1px solid #74748c;
  background: linear-gradient(#f8f8fc, #d4d4e2 15%, #c4c4d4 45%, #b4b4c8 90%, #77778f);
}
.start {
  gap: 6px;
  width: 97px;
  height: 29px;
  padding-right: 14px;
  border-radius: 0 8px 12px 0;
  background: linear-gradient(#7cc67c, #3c9c3c 20%, #348c34 65%, #54b04c 85%, #257025);
  box-shadow: inset -3px 0 3px #1f6a1f;
  color: #fff;
  font: italic bold 17px/20px 'Open Sans', sans-serif;
  text-shadow: 1px 1px 1px #1c4a1c;
}
.start svg {
  width: 19px;
  height: 19px;
}
.quick {
  display: flex;
  align-items: center;
  gap: 7px;
  width: 102px;
  padding-left: 11px;
}
.quick span {
  margin: -10px 0 0 4px;
  font: bold 16px/16px 'DejaVu Sans Condensed', sans-serif;
}
.tasks {
  display: flex;
  gap: 2px;
  flex: 1;
  min-width: 0;
}
.task {
  flex: 0 1 67px;
  justify-content: flex-start;
  gap: 4px;
  height: 24px;
  padding-left: 7px;
  border: 1px solid #a4a4b8;
  border-radius: 3px;
  background: linear-gradient(#fff, #e6e6f0 30%, #c8c8d8);
  color: #222;
}
.task.active {
  padding-left: 9px;
  border-color: #5c6474;
  background: #7d8494;
  color: #fff;
}
.lang {
  padding: 2px 0;
  width: 14px;
  background: #b4b4c0;
  text-align: center;
  margin-right: 5px;
}
.player {
  display: flex;
  align-items: center;
  gap: 9px;
  width: 106px;
  height: 23px;
  border: 1px solid #4c1c90;
  background: linear-gradient(#9474d0, #6434b0 30%, #6c40b8);
}
.player button {
  width: 12px;
  height: 12px;
}
.player button svg {
  width: 12px;
  height: 12px;
}
.tray {
  display: flex;
  align-items: center;
  gap: 3px;
  height: 29px;
  width: 110px;
  margin-left: 14px;
  background: linear-gradient(#fff, #eeeef4 30%, #d8d8e4 80%, #88889c);
}
.chevron {
  width: 18px;
  height: 18px;
  margin-left: -10px;
  border: 1px solid #f4f4fa;
  border-radius: 9px;
  background: #88889c;
}
.chevron svg {
  width: 16px;
  height: 16px;
}
.tray time {
  margin-left: 2px;
}
</style>
